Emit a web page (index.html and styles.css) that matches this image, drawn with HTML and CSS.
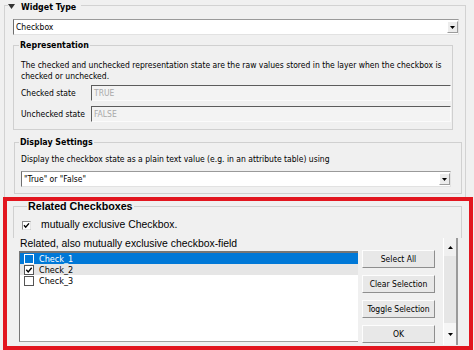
FILE: index.html
```html
<!DOCTYPE html>
<html>
<head>
<meta charset="utf-8">
<link rel="stylesheet" href="styles.css">
</head>
<body>
<div class="page">
  <fieldset class="outer">
    <legend class="outer-title"><svg class="tri" width="7" height="5" viewBox="0 0 7 5"><polygon points="0,0 7,0 3.5,5" fill="#333"/></svg>Widget Type</legend>
    <div class="combo combo-wide">
      <span class="combo-text">Checkbox</span>
      <span class="combo-btn"><svg width="5" height="3" viewBox="0 0 5 3"><polygon points="0,0 5,0 2.5,3" fill="#000"/></svg></span>
    </div>
    <fieldset class="group rep">
      <legend>Representation</legend>
      <p class="desc">The checked and unchecked representation state are the raw values stored in the layer when the checkbox is<br>checked or unchecked.</p>
      <div class="field-row">
        <span class="field-label">Checked state</span>
        <div class="input">TRUE</div>
      </div>
      <div class="field-row second">
        <span class="field-label">Unchecked state</span>
        <div class="input">FALSE</div>
      </div>
    </fieldset>
    <fieldset class="group disp">
      <legend>Display Settings</legend>
      <p class="desc">Display the checkbox state as a plain text value (e.g. in an attribute table) using</p>
      <div class="combo combo-disp">
        <span class="combo-text">"True" or "False"</span>
        <span class="combo-btn"><svg width="5" height="3" viewBox="0 0 5 3"><polygon points="0,0 5,0 2.5,3" fill="#000"/></svg></span>
      </div>
    </fieldset>
  </fieldset>

  <section class="highlight">
    <fieldset class="related">
      <legend>Related Checkboxes</legend>
      <div class="excl">
        <svg class="chk" width="9" height="9" viewBox="0 0 9 9"><rect x="0.5" y="0.5" width="8" height="8" fill="#fff" stroke="#8a8a8a"/><line x1="0.5" y1="8.5" x2="8.5" y2="8.5" stroke="#e4e4e4"/><line x1="8.5" y1="0.5" x2="8.5" y2="8.5" stroke="#e4e4e4"/><polyline points="2,4.2 3.7,6.2 7,2.4" fill="none" stroke="#000" stroke-width="1.4"/></svg>
        <span>mutually exclusive Checkbox.</span>
      </div>
    </fieldset>
    <div class="scroll-area">
      <div class="scroll-content">
        <div class="list-label">Related, also mutually exclusive checkbox-field</div>
        <div class="list-row">
          <ul class="list">
            <li class="item selected"><span class="box"></span>Check_1</li>
            <li class="item alt"><span class="box"><svg width="8" height="8" viewBox="0 0 8 8"><polyline points="1.3,3.8 3.2,5.9 6.7,1.8" fill="none" stroke="#000" stroke-width="1.4"/></svg></span>Check_2</li>
            <li class="item"><span class="box"></span>Check_3</li>
          </ul>
          <div class="buttons">
            <div class="btn">Select All</div>
            <div class="btn">Clear Selection</div>
            <div class="btn">Toggle Selection</div>
            <div class="btn">OK</div>
          </div>
        </div>
      </div>
      <div class="scrollbar">
        <div class="sb-btn"><svg width="5" height="3" viewBox="0 0 5 3"><polygon points="2.5,0 5,3 0,3" fill="#000"/></svg></div>
        <div class="sb-track"></div>
        <div class="sb-btn sb-down"><svg width="5" height="3" viewBox="0 0 5 3"><polygon points="0,0 5,0 2.5,3" fill="#000"/></svg></div>
      </div>
    </div>
  </section>
</div>
</body>
</html>
```

FILE: styles.css
```css
html, body {
  margin: 0;
  padding: 0;
}
body {
  background: #f0f0f0;
  width: 474px;
  height: 350px;
  overflow: hidden;
  font-family: "DejaVu Sans Condensed", "DejaVu Sans", sans-serif;
  font-stretch: condensed;
  font-size: 8.5px;
  color: #000;
}
.page {
  width: 474px;
  height: 350px;
  overflow: hidden;
}

/* group boxes */
fieldset {
  box-sizing: border-box;
  min-width: 0;
  margin: 0;
}
.outer {
  margin: -2px 0 0 4px;
  width: 462px;
  height: 199px;
  border: 1px solid #d2d2d2;
  border-bottom: none;
  padding: 6px 6px 0 8px;
}
.outer-title {
  margin-left: -5px;
  padding: 4px 5px 0 0;
  font-weight: bold;
  font-size: 8.8px;
  line-height: 11px;
}
.tri {
  display: inline-block;
  vertical-align: middle;
  margin: -2px 6px 0 0;
}
.group {
  border: 1px solid #d0d0d0;
}
.group legend {
  font-weight: bold;
  font-size: 8.8px;
  line-height: 11px;
  padding: 0 1px;
  margin-left: -2px;
}
.rep {
  margin-top: 5px;
  width: 440px;
  padding: 9px 1px 7px 7px;
}
.disp {
  margin: 7px 0 0 1px;
  width: 448px;
  padding: 6px 10px 6px 6px;
}
.desc {
  margin: 0;
  line-height: 11px;
  white-space: nowrap;
}

/* combobox */
.combo {
  display: flex;
  height: 16px;
  box-sizing: border-box;
  background: #fff;
  border-top: 1px solid #9a9a9a;
  border-left: 1px solid #6e6e6e;
  border-right: 1px solid #e2e2e2;
  border-bottom: 1px solid #e2e2e2;
}
.combo-disp {
  margin-top: 6px;
}
.combo-text {
  flex: 1;
  padding-left: 2px;
  line-height: 14px;
}
.combo-btn {
  width: 11px;
  margin: 1px 0 1px 0;
  box-sizing: border-box;
  border: 1px solid;
  border-color: #fff #9c9c9c #9c9c9c #fff;
  background: #ececec;
  display: flex;
  align-items: center;
  justify-content: center;
}

/* text inputs */
.field-row {
  display: flex;
  align-items: center;
  margin-top: 3px;
}
.field-row.second {
  margin-top: 5px;
}
.field-label {
  width: 70px;
}
.input {
  flex: 1;
  height: 16px;
  box-sizing: border-box;
  border-top: 1px solid #5c5c5c;
  border-left: 1px solid #5c5c5c;
  border-right: 1px solid #fbfbfb;
  border-bottom: 1px solid #fbfbfb;
  background: #f3f3f3;
  color: #a9a9a9;
  padding-left: 2px;
  line-height: 14px;
}

/* highlighted section */
.highlight {
  margin-left: 3px;
  width: 470px;
  height: 153px;
  box-sizing: border-box;
  border: 4px solid #e2161f;
  background: #f0f0f0;
}
.related {
  margin-left: 6px;
  width: 449px;
  border: 1px solid #d0d0d0;
  border-bottom: none;
  padding: 7px 0 6px 8px;
}
.related legend {
  font-family: "Liberation Sans", Arial, sans-serif;
  font-stretch: normal;
  font-weight: bold;
  font-size: 10.7px;
  line-height: 10px;
  padding: 0 1px;
  margin-left: 5px;
}
.excl {
  display: flex;
  align-items: center;
  gap: 10px;
  font-family: "Liberation Sans", Arial, sans-serif;
  font-stretch: normal;
  font-size: 10.4px;
  line-height: 14px;
}
.chk {
  display: block;
}

.scroll-area {
  display: flex;
  height: 108px;
}
.scroll-content {
  width: 436px;
  padding-left: 12px;
  box-sizing: border-box;
}
.list-label {
  font-family: "Liberation Sans", Arial, sans-serif;
  font-stretch: normal;
  font-size: 10.4px;
  line-height: 12px;
  padding-left: 1px;
}
.list-row {
  display: flex;
  align-items: flex-start;
  margin-top: 1px;
}
.list {
  list-style: none;
  margin: 0;
  padding: 0;
  width: 339px;
  height: 91px;
  box-sizing: border-box;
  background: #fff;
  border-top: 2px solid #767676;
  border-left: 1px solid #767676;
  border-bottom: 1px solid #a0a0a0;
}
.item {
  display: flex;
  align-items: center;
  height: 11px;
  padding-left: 4px;
  gap: 5px;
  font-size: 9px;
}
.item.selected {
  background: #0078d7;
  color: #fff;
}
.item.alt {
  background: #e6e6e6;
}
.box {
  width: 10px;
  height: 10px;
  box-sizing: border-box;
  border: 1px solid #555;
  background: #fff;
  display: flex;
  align-items: center;
  justify-content: center;
}
.item.selected .box {
  border-color: #fff;
  background: transparent;
}

.buttons {
  display: flex;
  flex-direction: column;
  gap: 7px;
  width: 73px;
  margin: -1px 0 0 4px;
}
.btn {
  height: 18px;
  box-sizing: border-box;
  border: 1px solid;
  border-color: #fdfdfd #8e8e8e #8e8e8e #fdfdfd;
  background: #e8e8e8;
  text-align: center;
  line-height: 16px;
  white-space: nowrap;
}

.scrollbar {
  width: 15px;
  height: 107px;
  box-sizing: border-box;
  border-left: 1px solid #fff;
  border-right: 2px solid #9a9a9a;
  background: #e6e6e6;
  display: flex;
  flex-direction: column;
}
.sb-btn {
  height: 18px;
  background: #f0f0f0;
  display: flex;
  align-items: center;
  justify-content: center;
}
.sb-down {
  height: 22px;
  background: #f6f6f6;
}
.sb-track {
  flex: 1;
}
```
